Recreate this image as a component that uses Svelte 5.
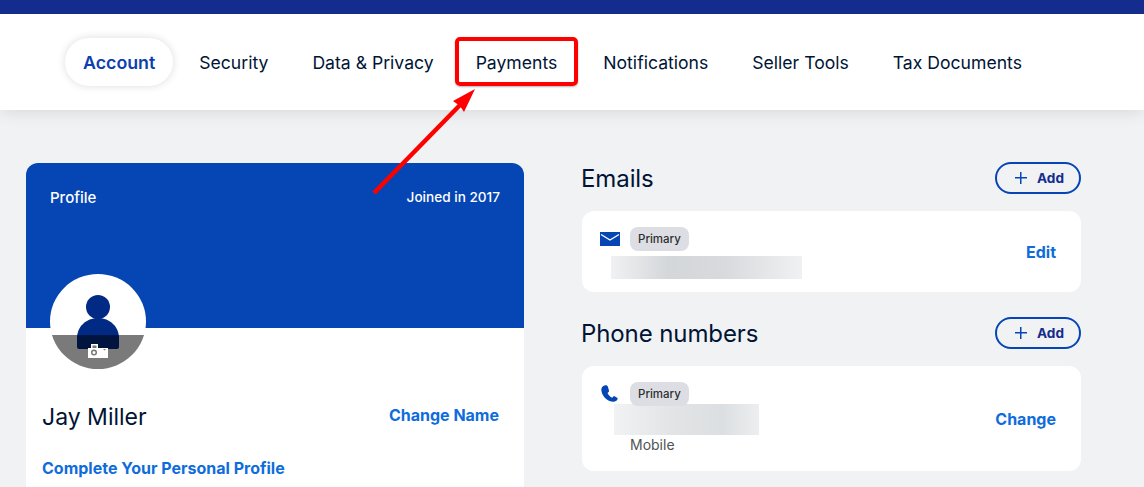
<script lang="ts">
	const tabs = ['Account', 'Security', 'Data & Privacy', 'Payments', 'Notifications', 'Seller Tools', 'Tax Documents'];
</script>

<div class="page">
	<div class="topbar"></div>

	<nav class="tabs">
		{#each tabs as tab, i}
			<a class="tab" class:active={i === 0} class:marked={tab === 'Payments'} href="#top">{tab}</a>
		{/each}
	</nav>

	<main class="content">
		<section class="profile">
			<div class="banner">
				<span class="banner-title">Profile</span>
				<span class="joined">Joined in 2017</span>
				<div class="avatar">
					<svg viewBox="0 0 96 96" width="96" height="96" aria-hidden="true">
						<rect width="96" height="96" fill="#fff" />
						<circle cx="48" cy="33" r="12" fill="#012a85" />
						<path d="M27 73V64c0-11 9-20 21-20s21 9 21 20v9a2 2 0 0 1-2 2H29a2 2 0 0 1-2-2z" fill="#012a85" />
						<rect y="61" width="96" height="35" fill="#000" fill-opacity="0.52" />
						<path d="M38 74h3v-4h7v4h10v10H38z" fill="#fff" />
						<rect x="42.500" y="71.500" width="4" height="2.500" fill="#777" />
						<circle cx="44" cy="78.500" r="2.300" fill="none" stroke="#777" stroke-width="1.500" />
						<path d="M53 75h3l-1.500 1.500z" fill="#777" />
					</svg>
				</div>
			</div>
			<div class="profile-body">
				<div class="name-row">
					<h2 class="name">Jay Miller</h2>
					<a class="link" href="#top">Change Name</a>
				</div>
				<a class="link" href="#top">Complete Your Personal Profile</a>
			</div>
		</section>

		<div class="contacts">
			<div class="section-head">
				<h2>Emails</h2>
				<button class="add"><span class="plus"></span>Add</button>
			</div>
			<div class="contact email">
				<div class="details">
					<div class="primary-row">
						<svg class="mail" viewBox="0 0 20 14" width="20" height="14" aria-hidden="true">
							<rect width="20" height="14" fill="#0546b4" />
							<path d="M1 2.500l9 5.500 9-5.500" fill="none" stroke="#fff" stroke-width="1.400" />
						</svg>
						<span class="badge">Primary</span>
					</div>
					<div class="blur email-blur"></div>
				</div>
				<a class="link action" href="#top">Edit</a>
			</div>

			<div class="section-head phones">
				<h2>Phone numbers</h2>
				<button class="add"><span class="plus"></span>Add</button>
			</div>
			<div class="contact phone">
				<div class="details">
					<div class="primary-row">
						<svg class="call" viewBox="0 0 17 17" width="17" height="17" aria-hidden="true">
							<path d="M3.600 0.400C1.700 0.900 0.300 2.500 0.300 4.500c0 6.200 6 12.300 12.100 12.300 1.900 0 3.600-1.100 4.200-2.800 0.200-0.500 0-1-0.500-1.300l-2.500-1.400c-0.500-0.300-1-0.200-1.400 0.300l-1 1.100c-2-0.900-3.800-2.700-4.700-4.800l1.200-1c0.400-0.400 0.500-0.900 0.300-1.400L6.800 1.600C6.400 0.500 5 0 3.600 0.400z" fill="#0546b4" />
						</svg>
						<span class="badge">Primary</span>
					</div>
					<div class="blur phone-blur"></div>
					<div class="kind">Mobile</div>
				</div>
				<a class="link action" href="#top">Change</a>
			</div>
		</div>
	</main>

	<!-- annotation drawn over the screenshot -->
	<svg class="arrow" viewBox="0 0 130 125" width="130" height="125" aria-hidden="true">
		<path d="M14 113L100 25" stroke="#f00" stroke-width="4.500" fill="none" />
		<path d="M115 9L93 21L100 26L104 32z" fill="#f00" />
	</svg>
</div>

<style>
	:global(body) {
		background: #f1f2f4;
		font-family: Inter, 'Liberation Sans', sans-serif;
	}

	.page {
		position: relative;
		height: 487px;
		overflow: hidden;
		background: #f1f2f4;
		color: #001435;
	}

	.topbar {
		position: relative;
		z-index: 1;
		height: 14px;
		background: #142c8e;
	}

	.tabs {
		position: relative;
		display: flex;
		align-items: center;
		gap: 8px;
		height: 96px;
		padding-left: 65px;
		box-sizing: border-box;
		background: #fff;
		box-shadow: 0 0 18px rgba(0, 0, 0, 0.13);
	}

	.tab {
		position: relative;
		display: flex;
		align-items: center;
		height: 48px;
		padding: 0 18px;
		border-radius: 24px;
		font-size: 17.600px;
		color: #001435;
		text-decoration: none;
		white-space: nowrap;
	}

	.tab.active {
		font-size: 17.800px;
		font-weight: 600;
		color: #0d3fb0;
		box-shadow: 0 0 8px rgba(0, 0, 0, 0.14);
	}

	.tab.marked {
		margin-left: -2px;
		margin-right: 2px;
	}

	.tab.marked::after {
		content: '';
		position: absolute;
		inset: -1px -3px 0 -3px;
		box-sizing: border-box;
		border: 4px solid #f00;
		border-radius: 5px;
		box-shadow: 0 1px 2px rgba(0, 0, 0, 0.3);
	}

	.content {
		display: flex;
		align-items: flex-start;
		gap: 57px;
		padding: 53px 0 0 26px;
	}

	.profile {
		flex: none;
		width: 498px;
		border-radius: 12px;
		overflow: hidden;
		background: #fff;
	}

	.banner {
		position: relative;
		display: flex;
		justify-content: space-between;
		height: 165px;
		padding: 24px 24px 0;
		box-sizing: border-box;
		background: #0546b4;
		color: #fff;
	}

	.banner-title {
		padding-top: 1px;
		font-size: 15px;
		line-height: 20px;
		font-weight: 500;
	}

	.joined {
		font-size: 13.600px;
		line-height: 20px;
		font-weight: 500;
	}

	.avatar {
		position: absolute;
		left: 24px;
		top: 111px;
		width: 96px;
		height: 95px;
		border-radius: 50%;
		overflow: hidden;
	}

	.avatar svg {
		display: block;
	}

	.profile-body {
		padding: 73px 25px 60px 16px;
	}

	.name-row {
		display: flex;
		align-items: center;
		justify-content: space-between;
		margin-bottom: 25px;
	}

	.name-row .link {
		margin-bottom: 4px;
	}

	.name {
		margin: 0;
		font-size: 23px;
		line-height: 32px;
		font-weight: 400;
	}

	.link {
		font-size: 16px;
		line-height: 20px;
		font-weight: 700;
		color: #0f6cdb;
		text-decoration: none;
		white-space: nowrap;
	}

	.contacts {
		flex: none;
		width: 500px;
		margin-top: -1px;
	}

	.section-head {
		display: flex;
		align-items: center;
		justify-content: space-between;
		height: 32px;
		margin-bottom: 17px;
	}

	.section-head.phones {
		margin-top: 25px;
	}

	.section-head h2 {
		margin: 0;
		font-size: 24px;
		font-weight: 400;
		letter-spacing: -0.100px;
	}

	.add {
		display: flex;
		align-items: center;
		justify-content: center;
		gap: 10px;
		width: 86px;
		height: 32px;
		padding: 0 0 0 3px;
		border: 2px solid #0546b4;
		border-radius: 16px;
		background: transparent;
		font-family: inherit;
		font-size: 13.600px;
		font-weight: 700;
		color: #142c8e;
	}

	.plus {
		width: 12px;
		height: 12px;
		background:
			linear-gradient(#0546b4, #0546b4) center / 12px 1.500px no-repeat,
			linear-gradient(#0546b4, #0546b4) center / 1.500px 12px no-repeat;
	}

	.contact {
		display: flex;
		align-items: center;
		justify-content: space-between;
		margin-left: 1px;
		padding: 0 25px 0 17px;
		border-radius: 12px;
		background: #fff;
	}

	.contact.email {
		height: 81px;
	}

	.contact.phone {
		height: 105px;
	}

	.details {
		align-self: flex-start;
		padding-top: 16px;
	}

	.primary-row {
		display: flex;
		align-items: center;
		height: 24px;
	}

	.mail {
		margin: 0 10px 0 1px;
	}

	.call {
		margin: -1px 12px 0 2px;
	}

	.badge {
		padding: 0 8px;
		height: 24px;
		border-radius: 8px;
		background: #dcdee3;
		font-size: 11.500px;
		line-height: 24px;
		font-weight: 500;
		color: #2c2e2f;
	}

	.blur {
		background: linear-gradient(90deg, #f0f1f2, #d4d7da 30%, #d8dadd 60%, #f0f1f3);
	}

	.email-blur {
		width: 191px;
		height: 23px;
		margin: 5px 0 0 12px;
	}

	.phone-blur {
		width: 145px;
		height: 31px;
		margin: -2px 0 0 15px;
		background: linear-gradient(90deg, #f1f2f3, #e2e4e6 40%, #dcdfe1 75%, #eceef0);
	}

	.kind {
		margin: 0 0 0 31px;
		font-size: 14px;
		line-height: 20px;
		color: #515354;
	}

	.action {
		color: #0f6cdb;
	}

	.arrow {
		position: absolute;
		left: 360px;
		top: 80px;
	}
</style>
